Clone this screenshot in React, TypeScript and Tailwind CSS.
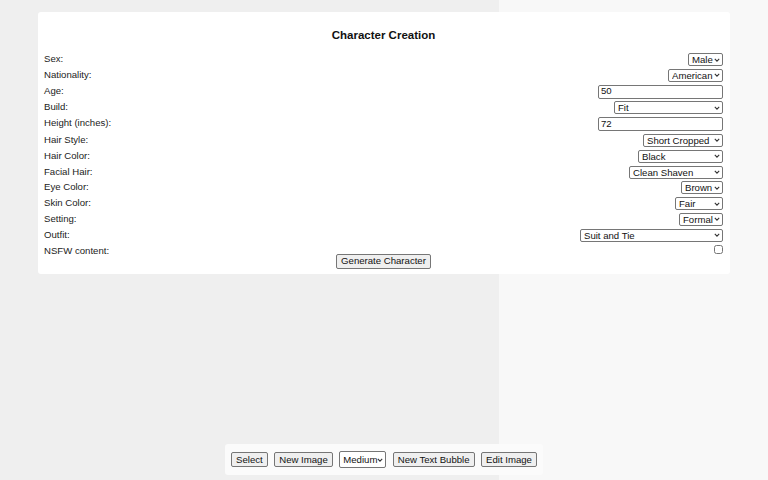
import React from "react";

const font = { fontFamily: '"Liberation Sans", Arial, sans-serif' };

type Row =
  | { label: string; kind: "select"; value: string; w: string }
  | { label: string; kind: "input"; value: string }
  | { label: string; kind: "check" };

const rows: Row[] = [
  { label: "Sex:", kind: "select", value: "Male", w: "w-[35px]" },
  { label: "Nationality:", kind: "select", value: "American", w: "w-[55px]" },
  { label: "Age:", kind: "input", value: "50" },
  { label: "Build:", kind: "select", value: "Fit", w: "w-[109px]" },
  { label: "Height (inches):", kind: "input", value: "72" },
  { label: "Hair Style:", kind: "select", value: "Short Cropped", w: "w-[80px]" },
  { label: "Hair Color:", kind: "select", value: "Black", w: "w-[85px]" },
  { label: "Facial Hair:", kind: "select", value: "Clean Shaven", w: "w-[94px]" },
  { label: "Eye Color:", kind: "select", value: "Brown", w: "w-[42px]" },
  { label: "Skin Color:", kind: "select", value: "Fair", w: "w-[48px]" },
  { label: "Setting:", kind: "select", value: "Formal", w: "w-[44px]" },
  { label: "Outfit:", kind: "select", value: "Suit and Tie", w: "w-[143px]" },
  { label: "NSFW content:", kind: "check" },
];

function Chevron() {
  return (
    <svg
      width="6"
      height="4"
      viewBox="0 0 6 4"
      className="pointer-events-none absolute right-[3px] top-1/2 -translate-y-1/2"
    >
      <path d="M0.8 0.9 L3 3.1 L5.2 0.9" fill="none" stroke="#333" strokeWidth="1.1" />
    </svg>
  );
}

function Select({ value, w, h }: { value: string; w: string; h: string }) {
  return (
    <div className={`relative flex shrink-0 ${w} ${h}`}>
      <select
        defaultValue={value}
        className="block appearance-none w-full h-full text-[9.6px] leading-[11px] border border-[#767676] rounded-[2px] bg-white text-[#111] pl-[3px] pr-[7px] py-0"
        style={font}
      >
        <option>{value}</option>
      </select>
      <Chevron />
    </div>
  );
}

function Control({ row }: { row: Row }) {
  if (row.kind === "select") {
    return <Select value={row.value} w={row.w} h="h-[13px]" />;
  }
  if (row.kind === "input") {
    return (
      <input
        defaultValue={row.value}
        className="block w-[125px] h-[14px] text-[9.6px] border border-[#767676] rounded-[2px] bg-white text-[#111] px-[2px]"
        style={font}
      />
    );
  }
  return <input type="checkbox" className="block w-[9px] h-[9px] m-0" />;
}

function Btn({ children }: { children: React.ReactNode }) {
  return (
    <button
      className="h-[15px] px-[4px] text-[9.6px] leading-[12px] border border-[#767676] rounded-[2px] bg-[#efefef] text-[#111]"
      style={font}
    >
      {children}
    </button>
  );
}

export default function App() {
  return (
    <div
      className="h-[480px] w-full flex flex-col items-center bg-[linear-gradient(to_right,#efefef_499px,#f8f8f8_499px)] text-black"
      style={font}
    >
      <div className="mt-[12px] w-[692px] bg-white rounded-[3px] pl-[6px] pr-[7px] pb-[5px]">
        <h3 className="text-[11.5px] font-bold text-center pt-[17px] leading-[13px] mb-[11px] text-[#111]">
          Character Creation
        </h3>
        <div className="flex flex-col gap-[2.8px]">
          {rows.map((r) => (
            <div key={r.label} className="flex justify-between items-start">
              <span className="text-[9.6px] leading-[11px] text-[#222]">{r.label}</span>
              <Control row={r} />
            </div>
          ))}
        </div>
        <div className="flex justify-center -mt-[2px]">
          <Btn>Generate Character</Btn>
        </div>
      </div>
      <div className="mt-auto mb-[5px] h-[31px] px-[6px] bg-[#fbfbfb] rounded-[3px] flex items-center justify-center gap-[6.5px]">
        <Btn>Select</Btn>
        <Btn>New Image</Btn>
        <Select value="Medium" w="w-[47px]" h="h-[17px]" />
        <Btn>New Text Bubble</Btn>
        <Btn>Edit Image</Btn>
      </div>
    </div>
  );
}
